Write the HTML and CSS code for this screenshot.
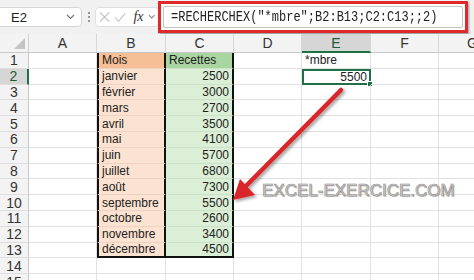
FILE: index.html
```html
<!DOCTYPE html>
<html lang="fr">
<head>
<meta charset="utf-8">
<title>RECHERCHEX</title>
<link rel="stylesheet" href="styles.css">
</head>
<body>
<div class="page">
  <div class="topbar">
    <div class="namebox"><span>E2</span>
      <svg class="chev" width="9" height="6" viewBox="0 0 9 6"><path d="M1 1l3.5 3.5L8 1" fill="none" stroke="#777" stroke-width="1.2"/></svg>
    </div>
    <div class="dots"><i></i><i></i><i></i></div>
    <div class="fbtns">
      <svg width="12" height="12" viewBox="0 0 12 12"><path d="M1 1l10 10M11 1L1 11" stroke="#bdbdbd" stroke-width="1.1" fill="none"/></svg>
      <svg width="13" height="11" viewBox="0 0 13 11"><path d="M1 5.5l4 4L12 1" stroke="#bdbdbd" stroke-width="1.1" fill="none"/></svg>
      <span class="fx">fx</span>
      <svg width="8" height="6" viewBox="0 0 8 6"><path d="M1 1l3 3 3-3" fill="none" stroke="#888" stroke-width="1.1"/></svg>
    </div>
    <div class="redframe">
      <div class="finput"><span class="ftext">=RECHERCHEX("*mbre";B2:B13;C2:C13;;2)</span></div>
    </div>
  </div>

  <div class="sheet">
    <div class="corner"><span class="tri"></span></div>
    <div class="ch">A</div><div class="ch">B</div><div class="ch">C</div><div class="ch">D</div><div class="ch sel">E</div><div class="ch">F</div><div class="ch">G</div>

    <div class="rh">1</div><div class="c"></div><div class="c tb hb">Mois</div><div class="c tc hc">Recettes</div><div class="c"></div><div class="c">*mbre</div><div class="c"></div><div class="c"></div>
    <div class="rh rsel">2</div><div class="c"></div><div class="c tb">janvier</div><div class="c tc num">2500</div><div class="c"></div><div class="c num active">5500<span class="handle"></span></div><div class="c"></div><div class="c"></div>
    <div class="rh">3</div><div class="c"></div><div class="c tb">février</div><div class="c tc num">3000</div><div class="c"></div><div class="c"></div><div class="c"></div><div class="c"></div>
    <div class="rh">4</div><div class="c"></div><div class="c tb">mars</div><div class="c tc num">2700</div><div class="c"></div><div class="c"></div><div class="c"></div><div class="c"></div>
    <div class="rh">5</div><div class="c"></div><div class="c tb">avril</div><div class="c tc num">3500</div><div class="c"></div><div class="c"></div><div class="c"></div><div class="c"></div>
    <div class="rh">6</div><div class="c"></div><div class="c tb">mai</div><div class="c tc num">4100</div><div class="c"></div><div class="c"></div><div class="c"></div><div class="c"></div>
    <div class="rh">7</div><div class="c"></div><div class="c tb">juin</div><div class="c tc num">5700</div><div class="c"></div><div class="c"></div><div class="c"></div><div class="c"></div>
    <div class="rh">8</div><div class="c"></div><div class="c tb">juillet</div><div class="c tc num">6800</div><div class="c"></div><div class="c"></div><div class="c"></div><div class="c"></div>
    <div class="rh">9</div><div class="c"></div><div class="c tb">août</div><div class="c tc num">7300</div><div class="c"></div><div class="c"></div><div class="c"></div><div class="c"></div>
    <div class="rh">10</div><div class="c"></div><div class="c tb">septembre</div><div class="c tc num">5500</div><div class="c"></div><div class="c"></div><div class="c"></div><div class="c"></div>
    <div class="rh">11</div><div class="c"></div><div class="c tb">octobre</div><div class="c tc num">2600</div><div class="c"></div><div class="c"></div><div class="c"></div><div class="c"></div>
    <div class="rh">12</div><div class="c"></div><div class="c tb">novembre</div><div class="c tc num">3400</div><div class="c"></div><div class="c"></div><div class="c"></div><div class="c"></div>
    <div class="rh">13</div><div class="c"></div><div class="c tb last">décembre</div><div class="c tc num last">4500</div><div class="c"></div><div class="c"></div><div class="c"></div><div class="c"></div>
    <div class="rh">14</div><div class="c"></div><div class="c"></div><div class="c"></div><div class="c"></div><div class="c"></div><div class="c"></div><div class="c"></div>
    <div class="rh">15</div><div class="c"></div><div class="c"></div><div class="c"></div><div class="c"></div><div class="c"></div><div class="c"></div><div class="c"></div>
  </div>

  <div class="watermark">EXCEL-EXERCICE.COM</div>

  <svg class="arrow" width="474" height="280" viewBox="0 0 474 280">
    <defs>
      <filter id="sh" x="-20%" y="-20%" width="140%" height="140%">
        <feDropShadow dx="2" dy="2" stdDeviation="1.5" flood-color="#000" flood-opacity="0.35"/>
      </filter>
    </defs>
    <g filter="url(#sh)">
      <line x1="341" y1="90" x2="246" y2="186" stroke="#d8262a" stroke-width="4.5" stroke-linecap="round"/>
      <polygon points="233,200 240,179 255,195" fill="#d8262a"/>
    </g>
  </svg>
</div>
</body>
</html>
```

FILE: styles.css
```css
* { box-sizing: border-box; }
html, body { margin: 0; padding: 0; }
body {
  width: 474px;
  height: 280px;
  overflow: hidden;
  background: #fff;
  font-family: "Liberation Sans", Arial, sans-serif;
  color: #222;
}
.page { position: relative; width: 474px; height: 280px; overflow: hidden; }

.topbar {
  height: 34px;
  background: #f1f1f1;
  display: flex;
  align-items: center;
}
.namebox {
  margin-left: -4px;
  width: 86px;
  height: 20px;
  background: #fff;
  border: 1px solid #d6d6d6;
  border-radius: 4px;
  display: flex;
  align-items: center;
  justify-content: space-between;
  padding: 0 6px 0 14px;
  font-size: 13px;
  color: #222;
}
.dots {
  width: 13px;
  display: flex;
  flex-direction: column;
  align-items: center;
  gap: 2px;
}
.dots i { display: block; width: 2px; height: 2px; background: #777; border-radius: 1px; }
.fbtns {
  width: 64px;
  height: 20px;
  background: #fff;
  border: 1px solid #e0e0e0;
  border-radius: 4px;
  display: flex;
  align-items: center;
  gap: 4px;
  padding: 0 3px 0 3px;
}
.fx {
  font-family: "Liberation Serif", serif;
  font-style: italic;
  font-size: 14px;
  color: #333;
  margin-left: 3px;
}
.redframe {
  width: 310px;
  height: 32px;
  margin-left: -1px;
  border: 3px solid #df2a2c;
  box-shadow: 1px 2px 2px rgba(0,0,0,0.35);
  padding: 2px;
  background: #fff;
}
.finput {
  height: 100%;
  border: 1px solid #c4c4c4;
  border-radius: 2px;
  padding-left: 7px;
  display: flex;
  align-items: center;
  white-space: nowrap;
  overflow: hidden;
}
.ftext {
  display: inline-block;
  font-family: "Liberation Mono", monospace;
  font-size: 15px;
  color: #222;
  transform: scaleX(0.8);
  transform-origin: left center;
}

.sheet {
  display: grid;
  grid-template-columns: 29px 68px 69px 68px 68px 69px 68px 68px;
  grid-template-rows: 19px repeat(15, 15.8px);
}
.corner {
  background: #f3f3f3;
  border-right: 1px solid #d0d0d0;
  border-bottom: 1px solid #c8c8c8;
  position: relative;
}
.tri {
  position: absolute;
  right: 3px;
  bottom: 3px;
  width: 0; height: 0;
  border-left: 11px solid transparent;
  border-bottom: 11px solid #c4c4c4;
}
.ch {
  background: #f3f3f3;
  border-right: 1px solid #d8d8d8;
  border-bottom: 1px solid #c8c8c8;
  display: flex;
  align-items: center;
  justify-content: center;
  font-size: 14px;
  color: #333;
}
.ch.sel {
  background: #d6d6d6;
  border-bottom: 2px solid #1e7145;
  color: #1d5c37;
}
.rh {
  background: #f3f3f3;
  border-right: 1px solid #c8c8c8;
  border-bottom: 1px solid #dedede;
  display: flex;
  align-items: center;
  justify-content: center;
  font-size: 14px;
  color: #333;
}
.rh.rsel {
  background: #d6d6d6;
  border-right: 2px solid #1e7145;
  color: #1d5c37;
}
.c {
  border-right: 1px solid #e1e1e1;
  border-bottom: 1px solid #e1e1e1;
  display: flex;
  align-items: center;
  padding: 0 3px;
  font-size: 12px;
  color: #222;
  white-space: nowrap;
  position: relative;
}
.num { justify-content: flex-end; }
.tb {
  background: #fce2d1;
  border-left: 2px solid #111;
  border-right: 2px solid #111;
  border-bottom-color: #eed3c2;
}
.tc {
  background: #dbeed6;
  border-right: 2px solid #111;
  border-bottom-color: #cbe0c6;
}
.hb { background: #f6bf95; }
.hc { background: #a9d5a1; }
.last { border-bottom: 2px solid #111; }

.active {
  border: 2px solid #1e7145;
  padding-right: 2px;
}
.handle {
  position: absolute;
  right: -4px;
  bottom: -4px;
  width: 6px;
  height: 6px;
  background: #1e7145;
  border: 1px solid #fff;
}

.watermark {
  position: absolute;
  left: 262px;
  top: 181px;
  font-size: 17px;
  color: #d4d4d4;
  -webkit-text-stroke: 0.6px #8c8c8c;
  text-shadow: 1px 1px 1px rgba(0,0,0,0.3);
  white-space: nowrap;
}
.arrow {
  position: absolute;
  left: 0;
  top: 0;
  pointer-events: none;
}
```
